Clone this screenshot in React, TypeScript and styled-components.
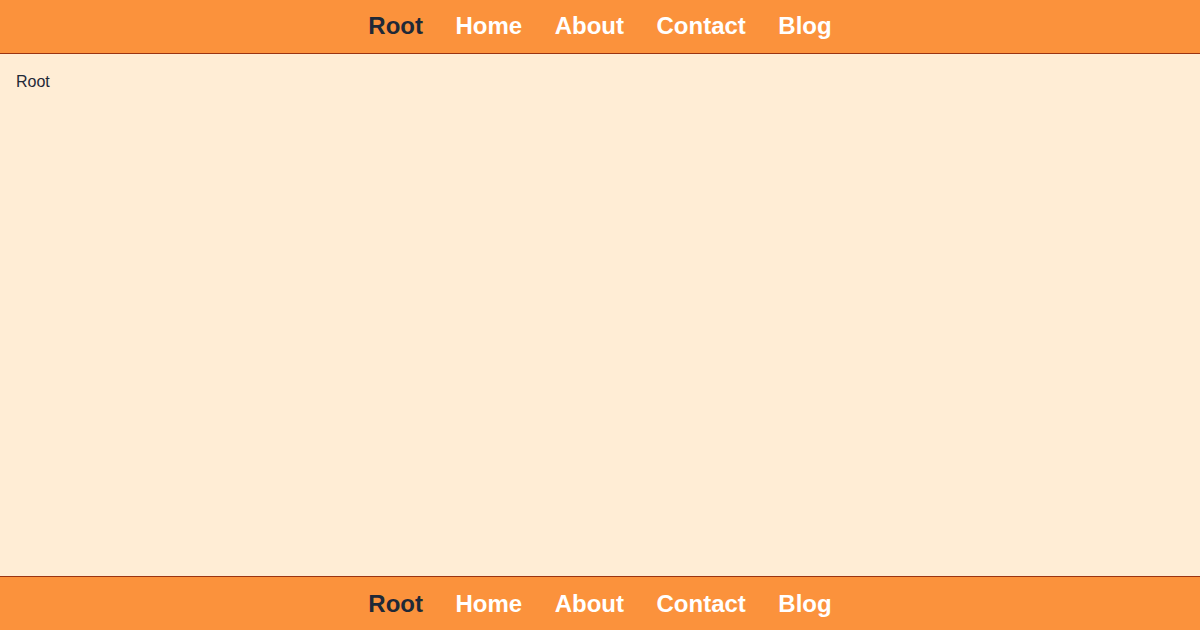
import styled, { createGlobalStyle } from "styled-components";

const Global = createGlobalStyle`
  html, body { margin: 0; padding: 0; }
  body { font-family: "Liberation Sans", Arial, sans-serif; background: #ffedd5; }
  #root { min-height: 100vh; }
`;

const links = ["Home", "About", "Contact", "Blog"];

function Nav({ position }: { position: "top" | "bottom" }) {
  return (
    <Bar $position={position}>
      <Brand href="#">Root</Brand>
      {links.map((l) => (
        <NavLink key={l} href="#">{l}</NavLink>
      ))}
    </Bar>
  );
}

export default function App() {
  return (
    <>
      <Global />
      <Page>
        <Nav position="top" />
        <Main>Root</Main>
        <Nav position="bottom" />
      </Page>
    </>
  );
}

const Page = styled.div`
  min-height: 100vh; display: flex; flex-direction: column;
`;
const Bar = styled.nav<{ $position: "top" | "bottom" }>`
  height: 53px; flex-shrink: 0; box-sizing: content-box;
  display: flex; align-items: center; justify-content: center; gap: 32.5px;
  background: #fb923c;
  ${(p) => p.$position === "top"
    ? "border-bottom: 1px solid #9a3412; height: 51px; padding-bottom: 2px;"
    : "border-top: 1px solid #9a3412;"}
`;
const Brand = styled.a`
  font-size: 24px; font-weight: 700; color: #1f2937; text-decoration: none;
`;
const NavLink = styled.a`
  font-size: 24px; font-weight: 700; color: #fff; text-decoration: none;
`;
const Main = styled.main`
  flex: 1; padding: 19px 16px 17px; font-size: 16px; color: #1f2937;
`;
